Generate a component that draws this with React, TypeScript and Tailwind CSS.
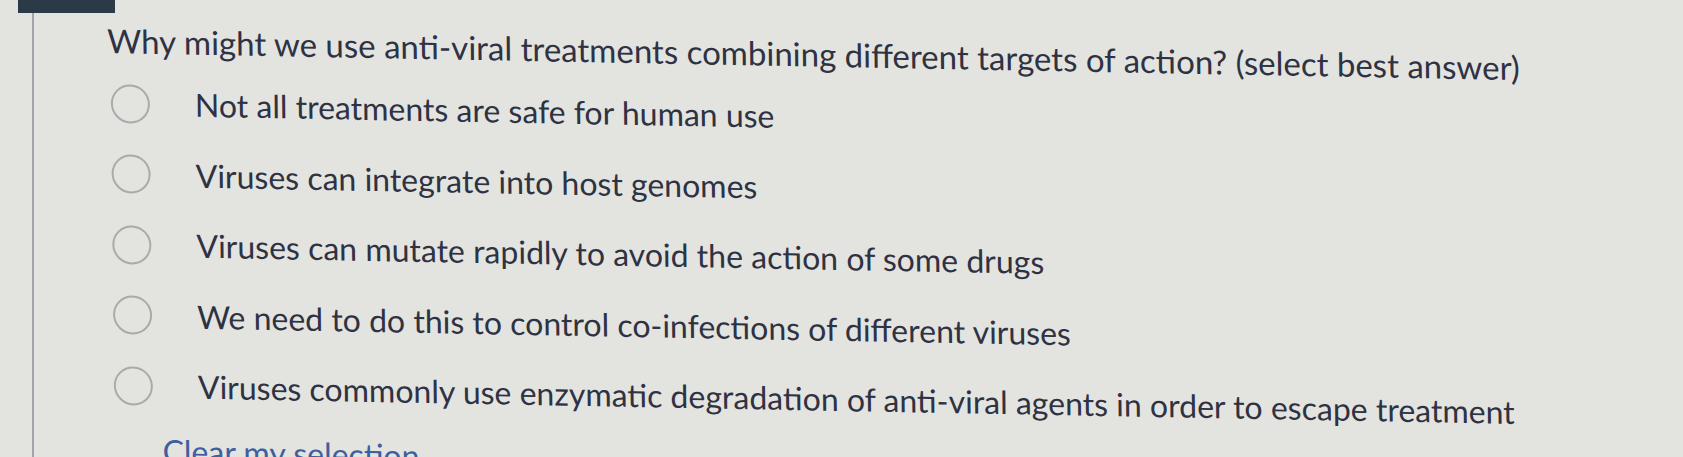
const OPTIONS = [
  "Not all treatments are safe for human use",
  "Viruses can integrate into host genomes",
  "Viruses can mutate rapidly to avoid the action of some drugs",
  "We need to do this to control co-infections of different viruses",
  "Viruses commonly use enzymatic degradation of anti-viral agents in order to escape treatment",
];

function Radio() {
  return (
    <span className="block w-[39px] h-[39px] shrink-0 rounded-full border-2 border-[#a9abab]" />
  );
}

export default function App() {
  return (
    <div className="w-[1683px] h-[457px] overflow-hidden bg-[#e3e4df] text-[#2e3243] font-['Lato','Noto_Sans',sans-serif]">
      {/* bit of the header bar above */}
      <div className="ml-[18px] w-[97px] h-[13px] bg-[#2b3a47]" />

      <div className="ml-[32px] border-l-2 border-[#a0a4a8] h-[444px] pl-[73px] pt-[7px]">
        {/* the photo is taken at a slight angle: rows slope down to the right */}
        <div className="origin-top-left skew-y-[1.1deg] skew-x-[0.6deg]">
          <h2 className="text-[33px] leading-[40px] font-normal whitespace-nowrap">
            Why might we use anti-viral treatments combining different targets of action? (select best answer)
          </h2>

          <ul className="mt-[8px] ml-[3px] flex flex-col">
            {OPTIONS.map((opt) => (
              <li key={opt} className="h-[70.5px] flex items-center gap-[45px]">
                <Radio />
                <span className="text-[32px] leading-[40px] whitespace-nowrap">{opt}</span>
              </li>
            ))}
          </ul>

          <button className="mt-[9px] ml-[51px] text-[32px] leading-[40px] text-[#3d5f9f]">
            Clear my selection
          </button>
        </div>
      </div>
    </div>
  );
}
